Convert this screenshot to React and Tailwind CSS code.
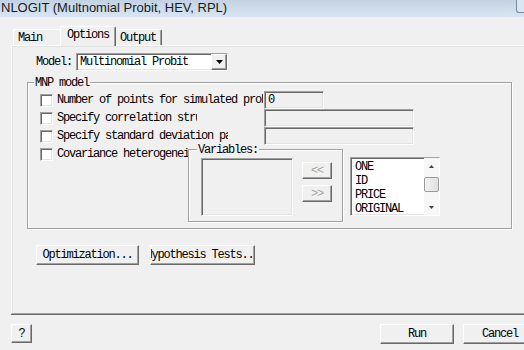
const mono = "[font-family:'Liberation_Mono','Courier_New',monospace] text-[12px] tracking-[-1.2px] leading-[14px]";
const raised =
  "bg-[#f0f0f0] border border-t-white border-l-white border-r-[#696969] border-b-[#696969] shadow-[inset_-1px_-1px_0_#a0a0a0]";
const sunken =
  "border border-t-[#a0a0a0] border-l-[#a0a0a0] border-b-white border-r-white shadow-[inset_1px_1px_0_#696969,inset_-1px_-1px_0_#e3e3e3]";
const etched = "border border-[#a0a0a0] shadow-[inset_1px_1px_0_#fff,1px_1px_0_#fff]";

function Check() {
  return <div className={`w-[13px] h-[13px] shrink-0 bg-white ${sunken}`} />;
}

function Tri({ up }) {
  return (
    <svg width="7" height="4" viewBox="0 0 7 4">
      <path d={up ? "M0 4 L3.5 0 L7 4 Z" : "M0 0 L7 0 L3.5 4 Z"} fill="#000" />
    </svg>
  );
}

function SmallTri({ up }) {
  return (
    <svg width="5" height="3" viewBox="0 0 5 3">
      <path d={up ? "M0 3 L2.5 0 L5 3 Z" : "M0 0 L5 0 L2.5 3 Z"} fill="#404040" />
    </svg>
  );
}

function Row({ label, clip, children }) {
  return (
    <div className="flex items-center h-[18px]">
      <Check />
      <div className="w-[207px] ml-[4px]">
        <div className={`overflow-hidden whitespace-nowrap text-black ${mono}`} style={{ width: clip }}>
          {label}
        </div>
      </div>
      {children}
    </div>
  );
}

function Btn({ children, className = "", disabled }) {
  return (
    <div className={`flex items-center justify-center overflow-hidden whitespace-nowrap ${raised} ${className}`}>
      <span
        className={`${mono} ${disabled ? "text-[#a0a0a0] [text-shadow:1px_1px_0_#fff]" : "text-black"}`}
      >
        {children}
      </span>
    </div>
  );
}

export default function App() {
  return (
    <div className="w-[524px] h-[350px] overflow-hidden bg-[#f0f0f0] text-black">
      {/* title bar */}
      <div className="h-[17px] flex justify-between bg-linear-to-b from-[#c3d2e2] to-[#d9e5f3]">
        <span className="pl-[1px] [font-family:'Liberation_Sans',Arial,sans-serif] text-[13px] leading-[15px] text-[#1a1a1a]">
          NLOGIT (Multnomial Probit, HEV, RPL)
        </span>
        <div className="w-[8px] h-[13px] border-l border-b border-[#7c8aa5] rounded-bl-[3px] bg-[#dce6f2]" />
      </div>

      {/* tabs */}
      <div className="mt-[9px] ml-[13px] flex items-end h-[19px]">
        <div className="w-[47px] h-[16px] flex items-center pl-[4px] border-t border-l border-white rounded-tl-[2px]">
          <span className={mono}>Main</span>
        </div>
        <div className="relative z-10 w-[56px] h-[20px] mb-[-1px] flex justify-center pt-[1px] bg-[#f0f0f0] border-t border-l border-r border-t-white border-l-white border-r-[#696969] rounded-t-[2px] shadow-[inset_-1px_0_0_#a0a0a0]">
          <span className={mono}>Options</span>
        </div>
        <div className="w-[46px] h-[16px] flex items-center pl-[4px] border-t border-r border-t-white border-r-[#696969] rounded-tr-[2px] shadow-[inset_-1px_0_0_#a0a0a0]">
          <span className={mono}>Output</span>
        </div>
      </div>

      {/* panel */}
      <div className="ml-[11px] w-[530px] h-[269px] flex flex-col border-t border-l border-b border-t-white border-l-white border-b-[#a0a0a0] shadow-[inset_1px_1px_0_#e3e3e3,0_1px_0_#696969]">
        <div className="mt-[7px] flex items-center h-[18px]">
          <span className={`ml-[24px] w-[36px] text-right ${mono}`}>Model:</span>
          <div className={`ml-[4px] w-[152px] h-[18px] flex items-center bg-white ${sunken}`}>
            <span className={`pl-[3px] ${mono}`}>Multinomial Probit</span>
            <div className={`ml-auto w-[16px] h-[16px] flex items-center justify-center ${raised}`}>
              <Tri />
            </div>
          </div>
        </div>

        {/* MNP model group */}
        <div className={`relative mt-[11px] ml-[15px] w-[485px] h-[147px] pt-[8px] pl-[12px] ${etched}`}>
          <span className={`absolute left-[6px] top-[-7px] px-[1px] bg-[#f0f0f0] leading-[12px] ${mono}`}>MNP model</span>

          <Row label="Number of points for simulated probabilities" clip={206}>
            <div className={`w-[60px] h-[18px] flex items-center pl-[3px] bg-[#f0f0f0] ${sunken}`}>
              <span className={mono}>0</span>
            </div>
          </Row>
          <Row label="Specify correlation structure" clip={140}>
            <div className={`w-[150px] h-[18px] bg-[#f0f0f0] ${sunken}`} />
          </Row>
          <Row label="Specify standard deviation parameters" clip={171}>
            <div className={`w-[150px] h-[18px] bg-[#f0f0f0] ${sunken}`} />
          </Row>

          <div className="flex items-start">
            <div className="flex items-center h-[18px]">
              <Check />
              <div className={`ml-[4px] w-[131px] overflow-hidden whitespace-nowrap ${mono}`}>
                Covariance heterogeneity
              </div>
            </div>

            {/* Variables group */}
            <div className={`relative mt-[4px] w-[155px] h-[73px] flex items-start pt-[8px] pl-[12px] ${etched}`}>
              <span className={`absolute left-[8px] top-[-7px] px-[1px] bg-[#f0f0f0] leading-[12px] ${mono}`}>Variables:</span>
              <div className={`w-[92px] h-[58px] bg-[#f0f0f0] ${sunken}`} />
              <div className="ml-[9px] mt-[4px] flex flex-col gap-[6px]">
                <Btn className="w-[30px] h-[17px]" disabled>&lt;&lt;</Btn>
                <Btn className="w-[30px] h-[17px]" disabled>&gt;&gt;</Btn>
              </div>
            </div>

            {/* variable list */}
            <div className={`ml-[7px] mt-[12px] w-[90px] h-[59px] flex bg-white ${sunken}`}>
              <div className={`flex-1 pl-[4px] pt-[2px] flex flex-col ${mono} leading-[13px]`}>
                <span>ONE</span>
                <span>ID</span>
                <span>PRICE</span>
                <span>ORIGINAL</span>
              </div>
              <div className="w-[15px] h-full flex flex-col bg-[#f7f7f7]">
                <div className="h-[16px] shrink-0 flex items-center justify-center">
                  <SmallTri up />
                </div>
                <div className="mt-[3px] h-[15px] shrink-0 rounded-[2px] border border-[#9a9a9a] bg-linear-to-r from-[#f2f2f2] to-[#e0e0e0]" />
                <div className="mt-auto h-[16px] shrink-0 flex items-center justify-center">
                  <SmallTri />
                </div>
              </div>
            </div>
          </div>
        </div>

        <div className="mt-[16px] ml-[24px] flex">
          <Btn className="w-[103px] h-[20px]">Optimization...</Btn>
          <Btn className="ml-[11px] w-[105px] h-[20px]">Hypothesis Tests...</Btn>
        </div>
      </div>

      {/* bottom buttons */}
      <div className="mt-[10px] pl-[11px] w-[537px] flex">
        <Btn className="w-[21px] h-[19px]">?</Btn>
        <Btn className="ml-auto w-[74px] h-[20px]">Run</Btn>
        <Btn className="ml-[9px] w-[74px] h-[20px]">Cancel</Btn>
      </div>
    </div>
  );
}
